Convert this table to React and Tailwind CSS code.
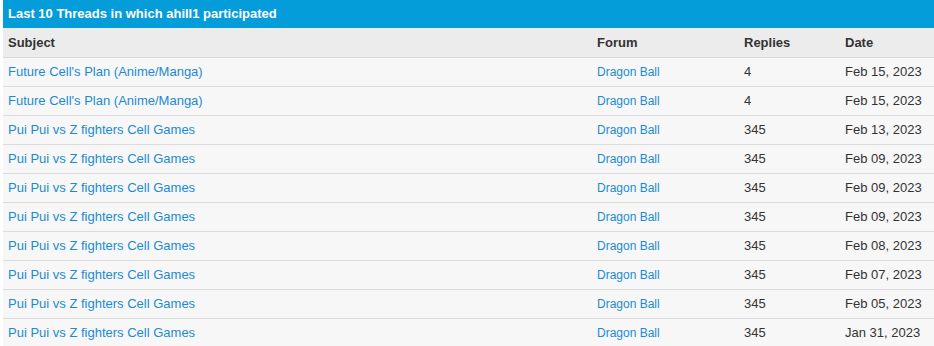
const threads = [
  { subject: "Future Cell's Plan (Anime/Manga)", replies: "4", date: "Feb 15, 2023" },
  { subject: "Future Cell's Plan (Anime/Manga)", replies: "4", date: "Feb 15, 2023" },
  { subject: "Pui Pui vs Z fighters Cell Games", replies: "345", date: "Feb 13, 2023" },
  { subject: "Pui Pui vs Z fighters Cell Games", replies: "345", date: "Feb 09, 2023" },
  { subject: "Pui Pui vs Z fighters Cell Games", replies: "345", date: "Feb 09, 2023" },
  { subject: "Pui Pui vs Z fighters Cell Games", replies: "345", date: "Feb 09, 2023" },
  { subject: "Pui Pui vs Z fighters Cell Games", replies: "345", date: "Feb 08, 2023" },
  { subject: "Pui Pui vs Z fighters Cell Games", replies: "345", date: "Feb 07, 2023" },
  { subject: "Pui Pui vs Z fighters Cell Games", replies: "345", date: "Feb 05, 2023" },
  { subject: "Pui Pui vs Z fighters Cell Games", replies: "345", date: "Jan 31, 2023" },
];

const cols = "grid grid-cols-[589px_147px_101px_1fr]";

export default function App() {
  return (
    <div className="min-h-[346px] bg-white pl-[3px] font-['Liberation_Sans',Arial,sans-serif]">
      <div className="flex h-[28px] items-center bg-[#059cda] px-[5px] text-[13px] font-bold text-white">
        Last 10 Threads in which ahill1 participated
      </div>
      <div className={`${cols} h-[30px] items-center border-b border-[#d9d9d9] bg-[#ececec] pt-px text-[13px] font-bold text-[#333]`}>
        <div className="px-[5px]">Subject</div>
        <div className="px-[5px]">Forum</div>
        <div className="px-[5px]">Replies</div>
        <div className="px-[5px]">Date</div>
      </div>
      {threads.map((t, i) => (
        <div key={i} className={`${cols} h-[29px] items-center border-b border-[#dcdcdc] bg-[#f7f7f7] text-[13px] text-[#333]`}>
          <a href="#" className="px-[5px] text-[#1a8bd3]">{t.subject}</a>
          <a href="#" className="px-[5px] text-[12px] text-[#1a8bd3]">Dragon Ball</a>
          <div className="px-[5px]">{t.replies}</div>
          <div className="px-[5px]">{t.date}</div>
        </div>
      ))}
    </div>
  );
}
